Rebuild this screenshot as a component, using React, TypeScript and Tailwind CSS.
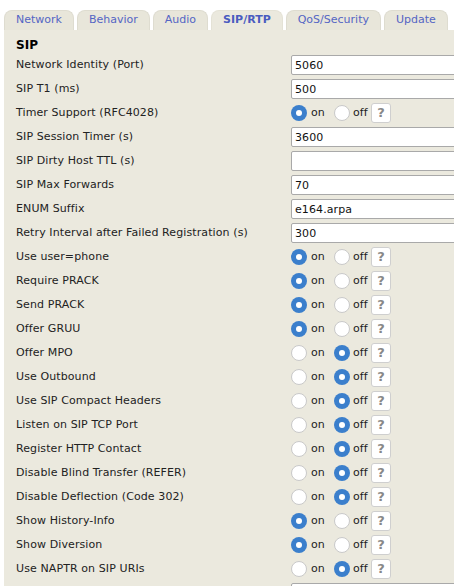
import React from "react";

type Row =
  | { label: string; kind: "text"; value: string }
  | { label: string; kind: "radio"; on: boolean };

const tabs = ["Network", "Behavior", "Audio", "SIP/RTP", "QoS/Security", "Update"];

const rows: Row[] = [
  { label: "Network Identity (Port)", kind: "text", value: "5060" },
  { label: "SIP T1 (ms)", kind: "text", value: "500" },
  { label: "Timer Support (RFC4028)", kind: "radio", on: true },
  { label: "SIP Session Timer (s)", kind: "text", value: "3600" },
  { label: "SIP Dirty Host TTL (s)", kind: "text", value: "" },
  { label: "SIP Max Forwards", kind: "text", value: "70" },
  { label: "ENUM Suffix", kind: "text", value: "e164.arpa" },
  { label: "Retry Interval after Failed Registration (s)", kind: "text", value: "300" },
  { label: "Use user=phone", kind: "radio", on: true },
  { label: "Require PRACK", kind: "radio", on: true },
  { label: "Send PRACK", kind: "radio", on: true },
  { label: "Offer GRUU", kind: "radio", on: true },
  { label: "Offer MPO", kind: "radio", on: false },
  { label: "Use Outbound", kind: "radio", on: false },
  { label: "Use SIP Compact Headers", kind: "radio", on: false },
  { label: "Listen on SIP TCP Port", kind: "radio", on: false },
  { label: "Register HTTP Contact", kind: "radio", on: false },
  { label: "Disable Blind Transfer (REFER)", kind: "radio", on: false },
  { label: "Disable Deflection (Code 302)", kind: "radio", on: false },
  { label: "Show History-Info", kind: "radio", on: true },
  { label: "Show Diversion", kind: "radio", on: true },
  { label: "Use NAPTR on SIP URIs", kind: "radio", on: false },
  { label: "", kind: "text", value: "" },
];

function Radio({ checked }: { checked: boolean }) {
  return checked ? (
    <span className="flex h-4 w-4 shrink-0 items-center justify-center rounded-full bg-[#3b7fcc]">
      <span className="h-[6px] w-[6px] rounded-full bg-white" />
    </span>
  ) : (
    <span className="h-4 w-4 shrink-0 rounded-full border border-[#c9c9c9] bg-white" />
  );
}

function OnOff({ on }: { on: boolean }) {
  return (
    <div className="flex h-6 items-center">
      <Radio checked={on} />
      <span className="ml-[4px] w-[23px]">on</span>
      <Radio checked={!on} />
      <span className="ml-[3px] w-[18px]">off</span>
      <span className="flex h-5 w-5 items-center justify-center rounded-[3px] border border-[#cfcfcf] bg-white text-[13px] font-bold text-[#888]">
        ?
      </span>
    </div>
  );
}

export default function App() {
  return (
    <div
      className="h-[586px] w-[454px] overflow-hidden bg-white text-[11px] text-[#222]"
      style={{ fontFamily: "'DejaVu Sans', Verdana, sans-serif" }}
    >
      <div className="ml-[4px] mt-[10px] flex gap-[3px]">
        {tabs.map((t) => {
          const active = t === "SIP/RTP";
          return (
            <div
              key={t}
              className={`flex h-5 items-center rounded-t-[8px] border border-b-0 px-[11px] ${
                active
                  ? "border-[#e4e2d6] bg-[#ebe9de] font-bold text-[#4a5cc0]"
                  : "border-[#dedcd0] bg-[#e8e6da] text-[#5465c4]"
              }`}
            >
              {t}
            </div>
          );
        })}
      </div>
      <div className="ml-[4px] w-[600px] bg-[#ebe9de] pl-[12px] tracking-[0.1px]">
        <div className="h-[23px] pt-[6px] text-[12px] font-bold text-black">SIP</div>
        {rows.map((r, i) => (
          <div key={i} className="flex h-6 items-center">
            <div className="w-[275px] shrink-0">{r.label}</div>
            {r.kind === "text" ? (
              <input
                readOnly
                value={r.value}
                className="h-5 w-[220px] rounded-[2px] border border-[#a9a9a9] bg-white px-[3px] text-[11px] text-[#111] outline-none"
                style={{ fontFamily: "'DejaVu Sans', Verdana, sans-serif" }}
              />
            ) : (
              <OnOff on={r.on} />
            )}
          </div>
        ))}
      </div>
    </div>
  );
}
